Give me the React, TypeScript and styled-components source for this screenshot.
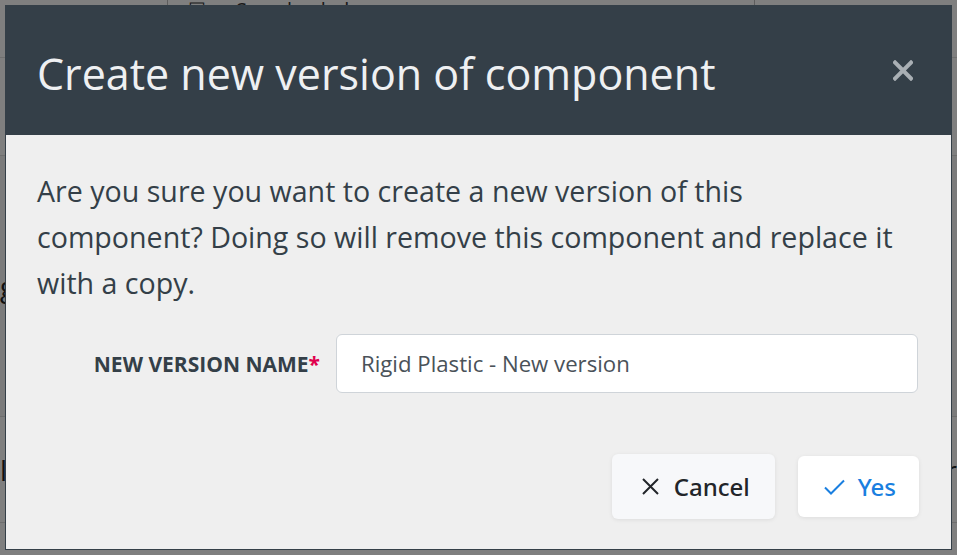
import styled, { createGlobalStyle } from "styled-components";

const GlobalStyle = createGlobalStyle`
  html, body {
    margin: 0;
    padding: 0;
    width: 957px;
    height: 555px;
    overflow: hidden;
    font-family: "Open Sans", "Noto Sans", Arial, sans-serif;
    background: #ffffff;
  }
`;

// Page behind the modal (mostly hidden by the backdrop)
const Page = styled.div`
  display: flex;
  flex-direction: column;
  height: 555px;
  color: #222;
`;

const TopBar = styled.div`
  display: flex;
  align-items: flex-start;
  height: 57px;
  padding-left: 167px;
  border-bottom: 1px solid #e0e0e0;
`;

const SearchBox = styled.div`
  display: flex;
  align-items: flex-start;
  gap: 30px;
  width: 566px;
  height: 100%;
  padding-left: 20px;
  border-left: 1px solid #bbb;
  border-right: 1px solid #bbb;
  font-size: 20px;
  line-height: 20px;
  color: #333;
`;

const PageRow = styled.div<{ $h: number; $shade?: boolean }>`
  height: ${(p) => p.$h}px;
  border-bottom: 1px solid #ddd;
  background: ${(p) => (p.$shade ? "#f6f6f6" : "#fff")};
  display: flex;
  align-items: center;
  justify-content: space-between;
  font-size: 28px;
  overflow: hidden;
`;

// Modal
const Backdrop = styled.div`
  position: fixed;
  inset: 0;
  background: rgba(0, 0, 0, 0.5);
  display: flex;
  padding: 5px;
  box-sizing: border-box;
`;

const Modal = styled.div`
  flex: 1;
  display: flex;
  flex-direction: column;
  border: 1px solid #343f48;
  background: #efefef;
  box-sizing: border-box;
`;

const Header = styled.div`
  display: flex;
  align-items: center;
  justify-content: space-between;
  height: 129px;
  padding: 6px 38px 0 31px;
  box-sizing: border-box;
  background: #343f48;
`;

const Title = styled.h1`
  margin: 0;
  font-family: "Open Sans", "Noto Sans", sans-serif;
  font-weight: 400;
  font-size: 43px;
  color: #eef0f2;
`;

const CloseButton = styled.button`
  border: 0;
  background: none;
  padding: 0;
  margin-top: -6px;
  display: flex;
  cursor: pointer;
`;

const Body = styled.div`
  flex: 1;
  display: flex;
  flex-direction: column;
  padding: 33px 33px 30px 31px;
`;

const Message = styled.p`
  margin: 0;
  max-width: 866px;
  font-size: 28.6px;
  line-height: 46px;
  color: #343f48;
`;

const FormRow = styled.div`
  display: flex;
  align-items: center;
  gap: 16px;
  margin-top: 28px;
`;

const Label = styled.label`
  width: 283px;
  text-align: right;
  font-size: 21px;
  font-weight: 700;
  color: #343f48;
  text-transform: uppercase;
`;

const Required = styled.span`
  color: #e0004d;
`;

const Input = styled.input`
  flex: 1;
  height: 59px;
  box-sizing: border-box;
  border: 1.5px solid #cfd4d9;
  border-radius: 6px;
  background: #fff;
  padding: 0 24px;
  font-family: "Open Sans", "Noto Sans", sans-serif;
  font-size: 22.2px;
  color: #4a5259;
  outline: none;
`;

const Footer = styled.div`
  display: flex;
  justify-content: flex-end;
  align-items: center;
  gap: 23px;
  margin-top: auto;
  margin-right: -1px;
`;

const Button = styled.button<{ $primary?: boolean }>`
  display: flex;
  align-items: center;
  gap: ${(p) => (p.$primary ? 13 : 15)}px;
  height: ${(p) => (p.$primary ? 61 : 65)}px;
  padding: 0 ${(p) => (p.$primary ? 23 : 25)}px 0
    ${(p) => (p.$primary ? 26 : 30)}px;
  border: 0;
  border-radius: 6px;
  background: ${(p) => (p.$primary ? "#ffffff" : "#f7f8fa")};
  color: ${(p) => (p.$primary ? "#1a7fe0" : "#222529")};
  font-family: "Noto Sans", "Open Sans", sans-serif;
  font-weight: 500;
  font-size: 24px;
  box-shadow: 0 1px 4px rgba(0, 0, 0, 0.08);
  cursor: pointer;
`;

const App = () => {
  return (
    <>
      <GlobalStyle />
      <Page>
        <TopBar>
          <SearchBox>
            <span>☐</span>
            <span>Search a help</span>
          </SearchBox>
        </TopBar>
        <PageRow $h={97} />
        <PageRow $h={260} $shade>
          <span>g</span>
        </PageRow>
        <PageRow $h={105}>
          <span>l</span>
          <span>r</span>
        </PageRow>
      </Page>
      <Backdrop>
        <Modal role="dialog">
          <Header>
            <Title>Create new version of component</Title>
            <CloseButton aria-label="Close">
              <svg width="20" height="21" viewBox="0 0 20 21">
                <path
                  d="M2 2.5 L18 18.5 M18 2.5 L2 18.5"
                  stroke="#a9afb4"
                  strokeWidth="4"
                  strokeLinecap="square"
                />
              </svg>
            </CloseButton>
          </Header>
          <Body>
            <Message>
              Are you sure you want to create a new version of this component?
              Doing so will remove this component and replace it with a copy.
            </Message>
            <FormRow>
              <Label htmlFor="version-name">
                New version name<Required>*</Required>
              </Label>
              <Input
                id="version-name"
                defaultValue="Rigid Plastic - New version"
              />
            </FormRow>
            <Footer>
              <Button>
                <svg width="17" height="17" viewBox="0 0 17 17">
                  <path
                    d="M1 1 L16 16 M16 1 L1 16"
                    stroke="#222529"
                    strokeWidth="2"
                  />
                </svg>
                Cancel
              </Button>
              <Button $primary>
                <svg width="21" height="16" viewBox="0 0 21 16">
                  <path
                    d="M1 8.5 L7 14.5 L20 1.5"
                    fill="none"
                    stroke="#1a7fe0"
                    strokeWidth="2"
                  />
                </svg>
                Yes
              </Button>
            </Footer>
          </Body>
        </Modal>
      </Backdrop>
    </>
  );
};

export default App;
